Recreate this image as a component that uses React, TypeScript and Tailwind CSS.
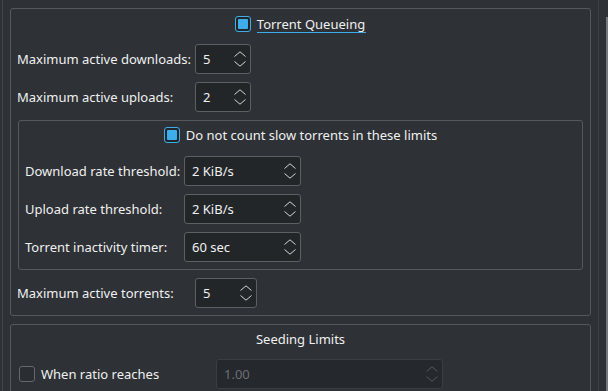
import React from "react"

const FONT = { fontFamily: '"Noto Sans", "DejaVu Sans", sans-serif' }

function Chevrons({ dim = false }: { dim?: boolean }) {
  return (
    <svg width="12" height="16" viewBox="0 0 12 16" fill="none" stroke={dim ? "#55585d" : "#d3d5d8"} strokeWidth="1">
      <polyline points="0.5,5.5 6,0.8 11.5,5.5" />
      <polyline points="0.5,10.5 6,15.2 11.5,10.5" />
    </svg>
  )
}

function SpinBox({ value, className, dim = false }: { value: string; className: string; dim?: boolean }) {
  return (
    <div
      className={
        "flex h-[30px] shrink-0 items-center justify-between rounded-[3px] border pl-[7px] pr-[4px] " +
        (dim ? "border-[#3a3d42] bg-[#25282c] text-[#6c6f74] " : "border-[#5c5f64] bg-[#232629] text-[#eff0f1] ") +
        className
      }
    >
      <span>{value}</span>
      <Chevrons dim={dim} />
    </div>
  )
}

function CheckBox({ checked }: { checked: boolean }) {
  return checked ? (
    <div className="flex h-4 w-4 shrink-0 items-center justify-center rounded-[3px] border border-[#3daee9] bg-[#232629]">
      <div className="h-[10px] w-[10px] rounded-[1px] bg-[#3daee9]" />
    </div>
  ) : (
    <div className="h-4 w-4 shrink-0 rounded-[3px] border border-[#65686d] bg-[#2a2d31]" />
  )
}

function Row({ label, value, labelWidth, boxWidth }: { label: string; value: string; labelWidth: string; boxWidth: string }) {
  return (
    <div className="flex items-center">
      <span className={labelWidth}>{label}</span>
      <SpinBox value={value} className={boxWidth} />
    </div>
  )
}

export default function App() {
  return (
    <div className="flex h-[391px] w-[608px] overflow-hidden bg-[#2e3135] text-[13px] leading-4 text-[#eff0f1]" style={FONT}>
      <div className="w-[2px] shrink-0" />
      <div className="flex w-[596px] shrink-0 flex-col border-l border-[#44474c] pl-[7px] pr-[7px]">
        {/* tail of the group above */}
        <div className="h-px w-[581px] bg-[#55585d]" />

        {/* Torrent Queueing */}
        <div className="mt-[8px] flex h-[308px] w-[581px] shrink-0 flex-col rounded-[3px] border border-[#55585d]">
          <div className="mt-[7px] flex items-start justify-center gap-[6px]">
            <CheckBox checked />
            <span className="border-b border-[#3daee9] pr-px">Torrent Queueing</span>
          </div>

          <div className="mt-[11px] flex flex-col gap-[8px] pl-[6px]">
            <Row label="Maximum active downloads:" value="5" labelWidth="w-[178px]" boxWidth="w-[56px]" />
            <Row label="Maximum active uploads:" value="2" labelWidth="w-[178px]" boxWidth="w-[56px]" />
          </div>

          {/* slow torrents */}
          <div className="mx-[7px] mt-[8px] flex h-[150px] flex-col rounded-[3px] border border-[#55585d]">
            <div className="mt-[6px] flex items-center justify-center gap-[6px]">
              <CheckBox checked />
              <span>Do not count slow torrents in these limits</span>
            </div>
            <div className="mt-[13px] flex flex-col gap-[8px] pl-[6px]">
              <Row label="Download rate threshold:" value="2 KiB/s" labelWidth="w-[159px]" boxWidth="w-[117px]" />
              <Row label="Upload rate threshold:" value="2 KiB/s" labelWidth="w-[159px]" boxWidth="w-[117px]" />
              <Row label="Torrent inactivity timer:" value="60 sec" labelWidth="w-[159px]" boxWidth="w-[117px]" />
            </div>
          </div>

          <div className="mt-[8px] pl-[6px]">
            <Row label="Maximum active torrents:" value="5" labelWidth="w-[178px]" boxWidth="w-[62px]" />
          </div>
        </div>

        {/* Seeding Limits */}
        <div className="mt-[8px] flex h-[120px] w-[581px] shrink-0 flex-col rounded-[3px] border border-[#55585d]">
          <div className="mt-[5px] h-[18px] text-center leading-[18px]">Seeding Limits</div>
          <div className="mt-[11px] flex items-center pl-[8px]">
            <CheckBox checked={false} />
            <span className="ml-[6px] w-[175px]">When ratio reaches</span>
            <SpinBox value="1.00" className="w-[227px]" dim />
          </div>
        </div>
      </div>
      <div className="w-px shrink-0 bg-[#3c3f44]" />
      <div className="w-[7px] shrink-0" />
      <div className="mt-[17px] w-[2px] shrink-0 bg-[#767980]" />
    </div>
  )
}
